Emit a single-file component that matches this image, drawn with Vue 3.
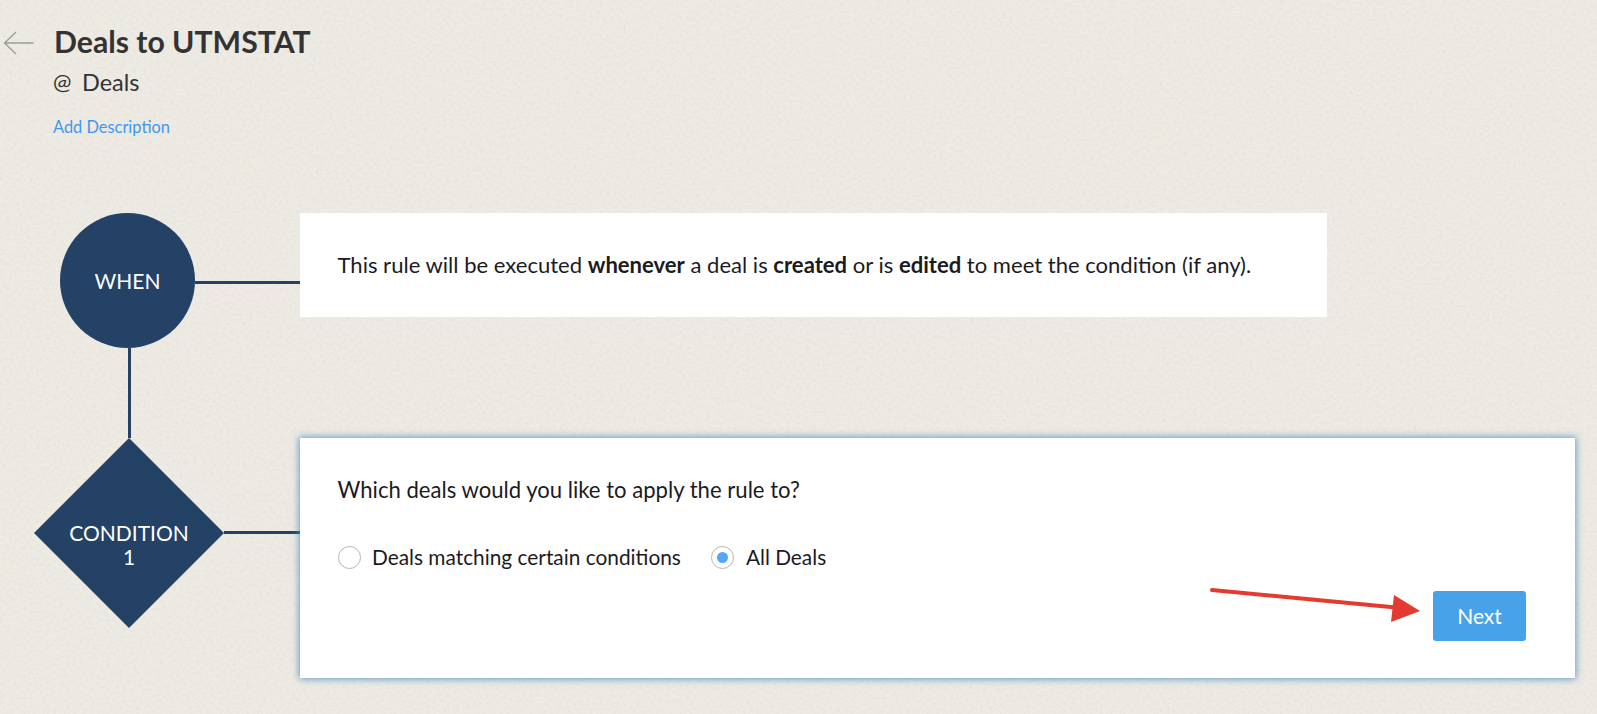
<script setup>
const options = [
  { label: 'Deals matching certain conditions', checked: false },
  { label: 'All Deals', checked: true }
]
</script>

<template>
  <div class="page">
    <svg class="paper" width="1597" height="714" aria-hidden="true">
      <filter id="weave" x="0" y="0" width="100%" height="100%">
        <feTurbulence type="fractalNoise" baseFrequency="0.3 0.36" numOctaves="2" seed="7" />
        <feColorMatrix type="matrix" values="0 0 0 0 0.5  0 0 0 0 0.47  0 0 0 0 0.4  0.3 0 0 0 -0.12" />
      </filter>
      <rect width="1597" height="714" filter="url(#weave)" />
    </svg>

    <div class="content">
      <header class="head">
        <svg class="back" width="31" height="24" viewBox="0 0 31 24" aria-hidden="true">
          <path d="M30.5 12H1.5M13 1 1.5 12 13 23" fill="none" stroke="#9a9a98" stroke-width="1.3" />
        </svg>
        <div class="head-text">
          <h1 class="title">Deals to UTMSTAT</h1>
          <div class="module"><span class="at">@</span><span>Deals</span></div>
          <a class="desc">Add Description</a>
        </div>
      </header>

      <section class="flow">
        <div class="row row-when">
          <div class="node-col">
            <div class="circle">WHEN</div>
          </div>
          <div class="h-line when-line"></div>
          <div class="card card-when">
            This rule will be executed <b>whenever</b> a deal is <b>created</b> or is <b>edited</b> to meet the condition (if any).
          </div>
        </div>

        <div class="v-line"></div>

        <div class="row row-cond">
          <div class="diamond"><span>CONDITION<br />1</span></div>
          <div class="h-line cond-line"></div>
          <div class="card card-cond">
            <p class="question">Which deals would you like to apply the rule to?</p>
            <div class="radios">
              <label v-for="o in options" :key="o.label" class="radio">
                <span class="dot" :class="{ on: o.checked }"></span>{{ o.label }}
              </label>
            </div>
            <div class="actions">
              <button class="next">Next</button>
              <svg class="arrow" width="216" height="40" viewBox="0 0 216 40" aria-hidden="true">
                <path d="M2 2 186 19.5" stroke="#e53a30" stroke-width="4" stroke-linecap="round" fill="none" />
                <path d="M184 7 210 23 181 34Z" fill="#e53a30" />
              </svg>
            </div>
          </div>
        </div>
      </section>
    </div>
  </div>
</template>

<style scoped>
.page {
  position: relative;
  width: 1597px;
  height: 714px;
  overflow: hidden;
  font-family: Lato, "Open Sans", sans-serif;
  color: #1b1b1f;
  background-color: #eeebe4;
}
.paper {
  position: absolute;
  left: 0;
  top: 0;
}
.content {
  position: relative;
}
.head {
  display: flex;
  align-items: flex-start;
  padding: 26px 0 0 3px;
  height: 213px;
  box-sizing: border-box;
}
.back {
  margin-top: 5px;
  flex: none;
}
.head-text {
  margin-left: 19px;
}
.title {
  margin: 0;
  font-size: 30.2px;
  line-height: 30px;
  font-weight: 700;
  color: #333;
  padding-left: 1px;
}
.module {
  display: flex;
  margin-top: 12px;
  font-size: 23.5px;
  line-height: 28px;
  color: #333;
}
.at {
  width: 29px;
  font-size: 22px;
}
.desc {
  display: block;
  margin-top: 21px;
  font-size: 16.4px;
  line-height: 20px;
  color: #3f97ec;
}
.row {
  display: flex;
  align-items: flex-start;
}
.node-col {
  margin-left: 60px;
}
.circle {
  width: 135px;
  height: 135px;
  border-radius: 50%;
  background: #234266;
  color: #fff;
  font-size: 21px;
  display: flex;
  align-items: center;
  justify-content: center;
}
.h-line {
  height: 3px;
  background: #234266;
  flex: none;
}
.when-line {
  width: 105px;
  margin-top: 68px;
}
.card {
  background: #fff;
  box-sizing: border-box;
  font-size: 22px;
}
.card-when {
  width: 1027px;
  height: 104px;
  padding: 0 37.5px;
  line-height: 104px;
  font-size: 22.05px;
  white-space: nowrap;
}
.v-line {
  width: 3px;
  height: 90px;
  margin-left: 128px;
  background: #234266;
}
.diamond {
  width: 190px;
  height: 190px;
  margin-left: 34px;
  flex: none;
  box-sizing: border-box;
  padding-top: 23px;
  background: #234266;
  clip-path: polygon(50% 0, 100% 50%, 50% 100%, 0 50%);
  color: #fff;
  font-size: 21px;
  line-height: 24px;
  display: flex;
  align-items: center;
  justify-content: center;
  text-align: center;
}
.cond-line {
  width: 76px;
  margin-top: 93px;
}
.card-cond {
  width: 1275px;
  height: 240px;
  padding: 38px 37.5px 0;
  font-size: 22.1px;
  box-shadow: 0 0 7px 1px rgba(80, 140, 195, 0.85);
}
.question {
  margin: 0;
  line-height: 28px;
}
.radios {
  display: flex;
  gap: 30.5px;
  margin-top: 40px;
}
.radio {
  display: flex;
  align-items: center;
  font-size: 20.85px;
  line-height: 26px;
  color: #1b1b1f;
}
.dot {
  width: 23px;
  height: 23px;
  box-sizing: border-box;
  border: 1px solid #b5b5b5;
  border-radius: 50%;
  margin-right: 11.5px;
  background: #fff;
  display: flex;
  align-items: center;
  justify-content: center;
}
.dot.on::after {
  content: "";
  width: 11px;
  height: 11px;
  border-radius: 50%;
  background: #58a5f5;
}
.actions {
  position: relative;
  display: flex;
  justify-content: flex-end;
  margin-top: 21px;
  padding-right: 11.5px;
}
.next {
  width: 93px;
  height: 50px;
  padding: 0 0 2px;
  border: none;
  border-radius: 3px;
  background: #47a2ea;
  color: #fff;
  font-family: inherit;
  font-size: 21px;
}
.arrow {
  position: absolute;
  left: 872px;
  top: -3px;
}
</style>
